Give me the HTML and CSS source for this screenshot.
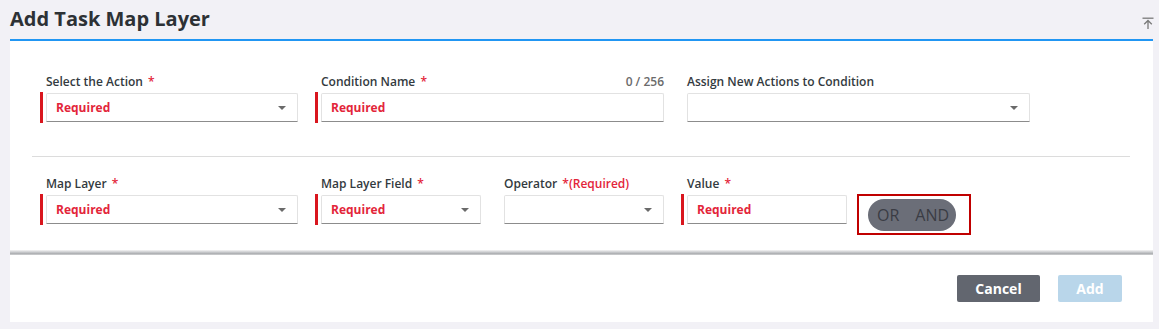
FILE: index.html
```html
<!DOCTYPE html>
<html>
<head>
<meta charset="utf-8">
<link rel="stylesheet" href="styles.css">
</head>
<body>
<div class="page">
  <div class="header">
    <h1 class="title">Add Task Map Layer</h1>
    <svg class="top-icon" width="12" height="12" viewBox="0 0 12 12">
      <path d="M0.5 1.2H11.5" stroke="#7a7a7a" stroke-width="1.3" fill="none"/>
      <path d="M6 3.5V12M2.2 7.3L6 3.5L9.8 7.3" stroke="#7a7a7a" stroke-width="1.3" fill="none"/>
    </svg>
  </div>
  <div class="panel">
    <div class="row row-top">
      <div class="group w1">
        <div class="label">Select the Action <span class="star">*</span></div>
        <div class="control-row">
          <span class="bar"></span>
          <div class="control select"><span class="req">Required</span><span class="caret"></span></div>
        </div>
      </div>
      <div class="group w2">
        <div class="label label-split"><span>Condition Name <span class="star">*</span></span><span class="counter">0 / 256</span></div>
        <div class="control-row">
          <span class="bar"></span>
          <div class="control"><span class="req">Required</span></div>
        </div>
      </div>
      <div class="group w2">
        <div class="label">Assign New Actions to Condition</div>
        <div class="control-row">
          <span class="bar bar-none"></span>
          <div class="control select"><span></span><span class="caret"></span></div>
        </div>
      </div>
    </div>
    <div class="divider"></div>
    <div class="row row-bottom">
      <div class="group w1">
        <div class="label">Map Layer <span class="star">*</span></div>
        <div class="control-row">
          <span class="bar"></span>
          <div class="control select"><span class="req">Required</span><span class="caret"></span></div>
        </div>
      </div>
      <div class="group w3">
        <div class="label">Map Layer Field <span class="star">*</span></div>
        <div class="control-row">
          <span class="bar"></span>
          <div class="control select"><span class="req">Required</span><span class="caret"></span></div>
        </div>
      </div>
      <div class="group w3">
        <div class="label">Operator <span class="star">*(Required)</span></div>
        <div class="control-row">
          <span class="bar bar-none"></span>
          <div class="control select"><span></span><span class="caret"></span></div>
        </div>
      </div>
      <div class="group w3">
        <div class="label">Value <span class="star">*</span></div>
        <div class="control-row">
          <span class="bar"></span>
          <div class="control"><span class="req">Required</span></div>
        </div>
      </div>
      <div class="toggle-box">
        <div class="pill"><span>OR</span><span>AND</span></div>
      </div>
    </div>
  </div>
  <div class="sep"></div>
  <div class="footer">
    <button class="btn btn-cancel">Cancel</button>
    <button class="btn btn-add">Add</button>
  </div>
</div>
</body>
</html>
```
FILE: styles.css
```css
* { box-sizing: border-box; }
html, body {
  margin: 0;
  padding: 0;
  background: #f2f1f6;
  font-family: "Open Sans", "Liberation Sans", sans-serif;
}
.page {
  margin: 0 6px 0 10px;
}
.header {
  height: 41px;
  padding-top: 5px;
  border-bottom: 2px solid #2196f3;
  display: flex;
  justify-content: space-between;
  align-items: flex-start;
}
.title {
  margin: 0;
  font-size: 20px;
  line-height: 28px;
  font-weight: 700;
  color: #2d3135;
}
.top-icon {
  margin-top: 12px;
  margin-right: -1px;
}
.panel {
  background: #fff;
  padding: 33px 23px 15px 30px;
}
.row {
  display: flex;
  align-items: flex-start;
  gap: 17px;
}
.group { display: flex; flex-direction: column; }
.w1 { width: 258px; }
.w2 { width: 349px; }
.w3 { width: 166px; }
.label {
  margin-left: 6px;
  font-size: 12px;
  line-height: 16px;
  font-weight: 600;
  color: #333a40;
  margin-bottom: 3px;
  white-space: nowrap;
}
.label-split {
  display: flex;
  justify-content: space-between;
}
.counter {
  font-weight: 600;
  color: #6b6b6b;
}
.star {
  color: #e3253a;
  margin-left: 2px;
}
.control-row {
  display: flex;
  align-items: stretch;
}
.bar {
  width: 3px;
  margin-right: 3px;
  background: #d9161e;
  margin-top: -1px;
  margin-bottom: -1px;
}
.bar-none { background: transparent; }
.control {
  flex: 1;
  height: 29px;
  border: 1px solid #e2e2e2;
  border-bottom: 1px solid #8c8c8c;
  border-radius: 2px 2px 0 0;
  padding: 0 11px 0 9px;
  display: flex;
  align-items: center;
  justify-content: space-between;
}
.req {
  color: #e3253a;
  font-size: 12px;
  font-weight: 700;
}
.caret {
  width: 0;
  height: 0;
  border-left: 4px solid transparent;
  border-right: 4px solid transparent;
  border-top: 4px solid #6a6a6a;
}
.divider {
  height: 1px;
  background: #dcdcdc;
  margin: 34px 0 19px -8px;
}
.toggle-box {
  margin-top: 18px;
  margin-left: -7px;
  width: 114px;
  height: 41px;
  border: 2px solid #c00000;
  padding: 3px 0 0 9px;
}
.pill {
  width: 88px;
  height: 32px;
  border-radius: 16px;
  background: #6b6e78;
  color: #3a3c44;
  font-size: 16px;
  display: flex;
  align-items: center;
  gap: 16px;
  padding-left: 9px;
}
.sep {
  height: 5px;
  background: linear-gradient(#f4f4f5, #b9bbbe 60%, #a7a9ac 80%, #e3e4e5);
}
.footer {
  background: #fff;
  height: 67px;
  padding: 20px 31px 0 0;
  display: flex;
  justify-content: flex-end;
  gap: 18px;
}
.btn {
  height: 27px;
  border: none;
  border-radius: 2px;
  font-family: "Open Sans", "Liberation Sans", sans-serif;
  font-size: 14px;
  font-weight: 700;
  color: #fff;
  padding: 0;
}
.btn-cancel { width: 83px; background: #62666f; }
.btn-add { width: 64px; background: #b9d6ea; }
```
